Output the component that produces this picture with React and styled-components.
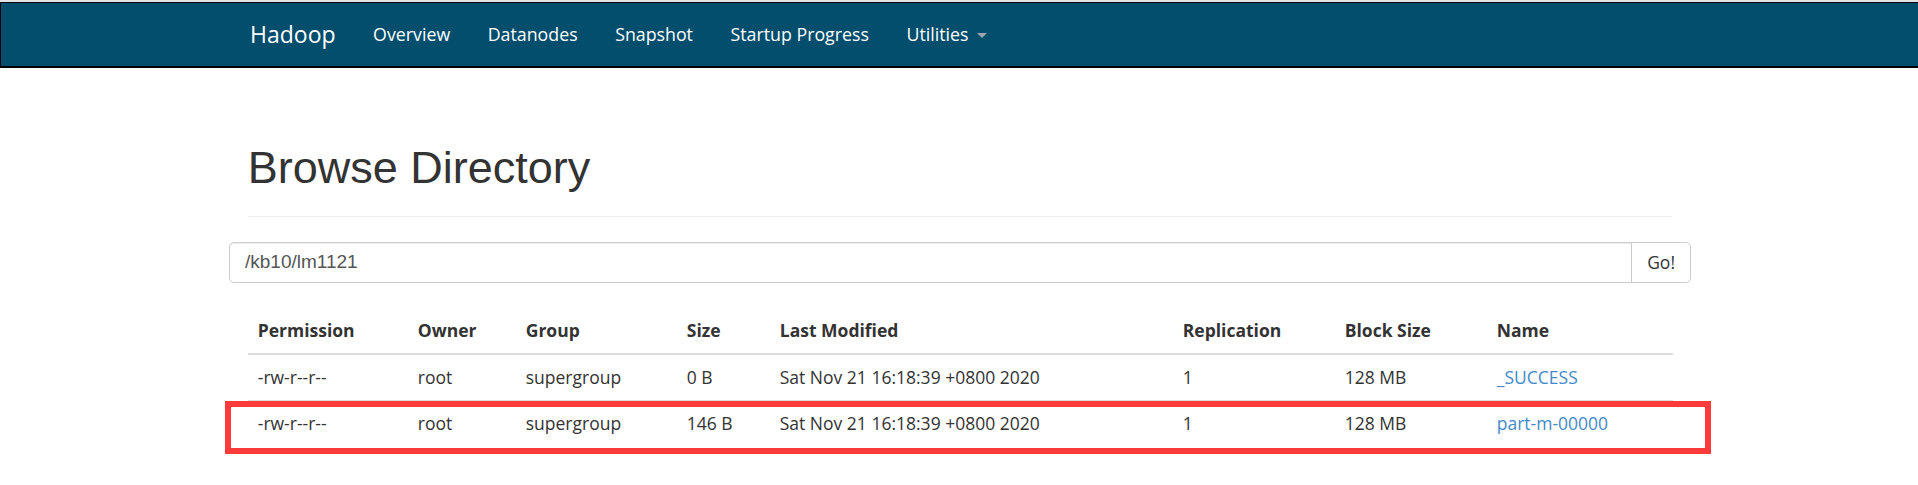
import React from "react";
import styled, { createGlobalStyle } from "styled-components";

const GlobalStyle = createGlobalStyle`
  html, body { margin: 0; padding: 0; background: #fff; }
  body {
    font-family: "Open Sans", "Noto Sans", sans-serif;
    font-size: 17.5px;
    line-height: 25px;
    color: #333;
  }
  * { box-sizing: border-box; }
`;

const Page = styled.div`
  border-top: 2px solid #e4e4e4;
  min-height: 485px;
`;

const Navbar = styled.nav`
  background: #034d6d;
  border-top: 1px solid #000;
  border-left: 1px solid #000;
  border-bottom: 2px solid #000;
  height: 65.5px;
`;

const Container = styled.div`
  width: 1462px;
  margin-left: calc(50% - 730px);
  padding: 0 18.75px;
`;

const NavInner = styled(Container)`
  display: flex;
  align-items: flex-start;
  height: 62.5px;
`;

const Brand = styled.a`
  display: block;
  margin-left: -17px;
  padding: 18.75px;
  font-size: 23px;
  line-height: 25px;
  color: #fff;
  text-decoration: none;
`;

const NavList = styled.ul`
  display: flex;
  margin: 0;
  padding: 0;
  list-style: none;
`;

const NavLink = styled.a`
  display: flex;
  align-items: center;
  padding: 18.75px;
  font-size: 17.8px;
  line-height: 25px;
  color: #fff;
  text-decoration: none;
  white-space: nowrap;
`;

const Caret = styled.span`
  display: inline-block;
  width: 0;
  height: 0;
  margin-left: 8px;
  margin-top: 2px;
  border-top: 5px solid #9aa7ae;
  border-left: 5px solid transparent;
  border-right: 5px solid transparent;
`;

const PageHeader = styled.div`
  margin: 75px 0 25px;
  padding-bottom: 11.25px;
  border-bottom: 1px solid #eee;
`;

const Title = styled.h1`
  margin: 0 0 12.5px;
  font-family: "Liberation Sans", Arial, sans-serif;
  font-weight: 400;
  font-size: 45px;
  line-height: 49.5px;
  color: #333;
`;

const InputGroup = styled.div`
  display: flex;
  margin: 0 -18.75px;
  height: 41px;
`;

const PathInput = styled.input`
  flex: 1;
  height: 41px;
  padding: 0 15px;
  border: 1px solid #ccc;
  border-radius: 5px 0 0 5px;
  font-family: "Liberation Sans", Arial, sans-serif;
  font-size: 19px;
  color: #555;
  box-shadow: inset 0 1px 1px rgba(0, 0, 0, 0.075);
  outline: none;
`;

const GoButton = styled.button`
  height: 41px;
  padding: 0 15px;
  margin-left: -1px;
  border: 1px solid #ccc;
  border-radius: 0 5px 5px 0;
  background: #fff;
  font-family: "Open Sans", "Noto Sans", sans-serif;
  font-size: 17.5px;
  color: #333;
`;

const TableWrap = styled.div`
  position: relative;
  margin-top: 25px;
`;

const Table = styled.table`
  width: 100%;
  border-collapse: collapse;
  table-layout: fixed;
`;

const Col = styled.col`
  width: ${(p) => p.$w}px;
`;

const Th = styled.th`
  padding: 10px;
  text-align: left;
  font-weight: 700;
  line-height: 25px;
  border-bottom: 2.5px solid #ddd;
  white-space: nowrap;
`;

const Td = styled.td`
  padding: 10px;
  line-height: 25px;
  border-top: 1.25px solid #ddd;
  white-space: nowrap;
`;

const FileLink = styled.a`
  color: #428bca;
  text-decoration: none;
`;

const Highlight = styled.div`
  position: absolute;
  left: -23px;
  top: 93px;
  width: 1486px;
  height: 53px;
  border: 6.5px solid #fb3a3a;
  pointer-events: none;
`;

const cols = [160, 108, 161, 93, 403, 162, 152, 186];
const headers = [
  "Permission",
  "Owner",
  "Group",
  "Size",
  "Last Modified",
  "Replication",
  "Block Size",
  "Name",
];
const rows = [
  ["-rw-r--r--", "root", "supergroup", "0 B", "Sat Nov 21 16:18:39 +0800 2020", "1", "128 MB", "_SUCCESS"],
  ["-rw-r--r--", "root", "supergroup", "146 B", "Sat Nov 21 16:18:39 +0800 2020", "1", "128 MB", "part-m-00000"],
];

export default function App() {
  return (
    <Page>
      <GlobalStyle />
      <Navbar>
        <NavInner>
          <Brand href="#">Hadoop</Brand>
          <NavList>
            <li><NavLink href="#">Overview</NavLink></li>
            <li><NavLink href="#">Datanodes</NavLink></li>
            <li><NavLink href="#">Snapshot</NavLink></li>
            <li><NavLink href="#">Startup Progress</NavLink></li>
            <li>
              <NavLink href="#">
                Utilities
                <Caret />
              </NavLink>
            </li>
          </NavList>
        </NavInner>
      </Navbar>
      <Container>
        <PageHeader>
          <Title>Browse Directory</Title>
        </PageHeader>
        <InputGroup>
          <PathInput defaultValue="/kb10/lm1121" />
          <GoButton>Go!</GoButton>
        </InputGroup>
        <TableWrap>
          <Table>
            <colgroup>
              {cols.map((w, i) => (
                <Col key={i} $w={w} />
              ))}
            </colgroup>
            <thead>
              <tr>
                {headers.map((h) => (
                  <Th key={h}>{h}</Th>
                ))}
              </tr>
            </thead>
            <tbody>
              {rows.map((r, i) => (
                <tr key={i}>
                  {r.slice(0, 7).map((c, j) => (
                    <Td key={j}>{c}</Td>
                  ))}
                  <Td>
                    <FileLink href="#">{r[7]}</FileLink>
                  </Td>
                </tr>
              ))}
            </tbody>
          </Table>
          <Highlight />
        </TableWrap>
      </Container>
    </Page>
  );
}
